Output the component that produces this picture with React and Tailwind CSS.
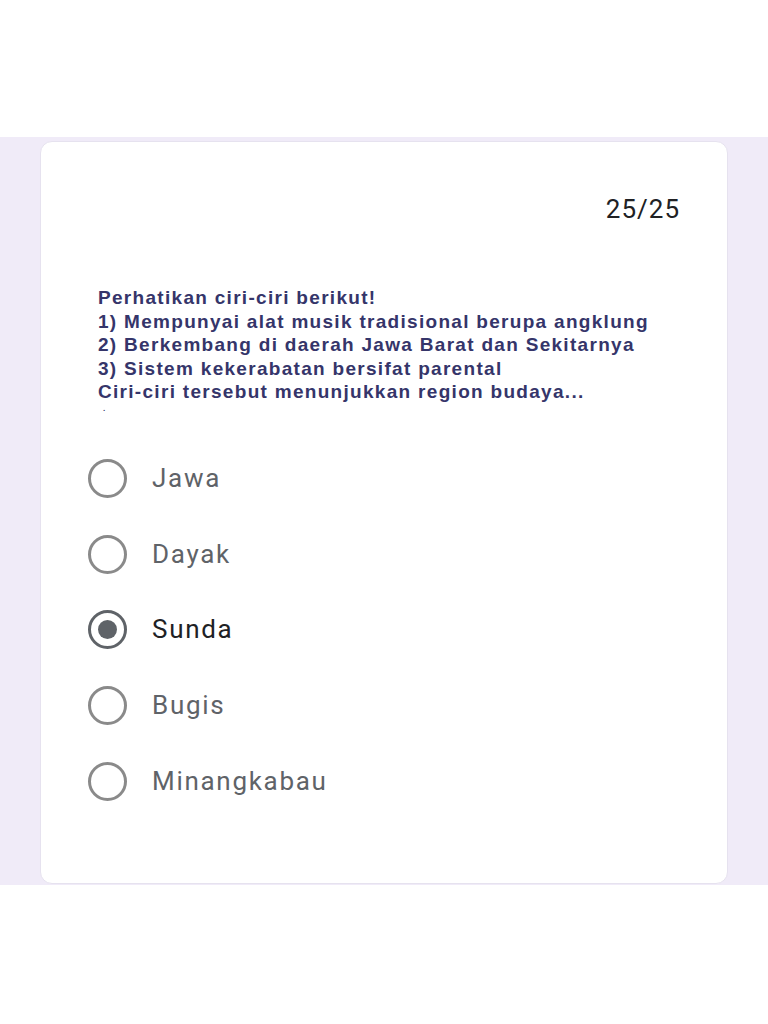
export default function App() {
  const options = ["Jawa", "Dayak", "Sunda", "Bugis", "Minangkabau"];
  const selected = "Sunda";

  return (
    <div className="w-[768px] h-[1024px] bg-white pt-[137px]" style={{ fontFamily: "Roboto, sans-serif" }}>
      <div className="h-[748px] bg-[#f0ebf8] pt-[4px]">
        <div className="mx-[40px] h-[743px] bg-white rounded-[12px] border border-[#e6e2ef] px-[47px]">
          <div className="pt-[49px] flex justify-end">
            <span className="text-[26px] leading-[36px] tracking-[1px] text-[#202124]">25/25</span>
          </div>

          <div
            className="mt-[59px] ml-[10px] text-[19px] leading-[23.5px] tracking-[1.3px] font-bold text-[#35356a]"
            style={{ fontFamily: '"Liberation Sans", Arial, sans-serif' }}
          >
            <p>Perhatikan ciri-ciri berikut!</p>
            <p>1) Mempunyai alat musik tradisional berupa angklung</p>
            <p>2) Berkembang di daerah Jawa Barat dan Sekitarnya</p>
            <p>3) Sistem kekerabatan bersifat parental</p>
            <p>Ciri-ciri tersebut menunjukkan region budaya...</p>
            <p className="text-[8px] leading-[10px] ml-[5px]">.</p>
          </div>

          <div className="mt-[45px] flex flex-col gap-[35.7px]">
            {options.map((opt) => {
              const on = opt === selected;
              return (
                <div key={opt} className="flex items-center h-[40px]">
                  <div
                    className={
                      on
                        ? "w-[39px] h-[39px] rounded-full border-[3px] border-[#5f6368] flex items-center justify-center"
                        : "w-[39px] h-[39px] rounded-full border-[3px] border-[#8a8a8a]"
                    }
                  >
                    {on && <div className="w-[19px] h-[19px] rounded-full bg-[#5f6368]" />}
                  </div>
                  <span
                    className={
                      on
                        ? "ml-[25px] text-[26px] tracking-[1.7px] text-[#202124]"
                        : "ml-[25px] text-[26px] tracking-[1.7px] text-[#5f6368]"
                    }
                  >
                    {opt}
                  </span>
                </div>
              );
            })}
          </div>
        </div>
      </div>
    </div>
  );
}
